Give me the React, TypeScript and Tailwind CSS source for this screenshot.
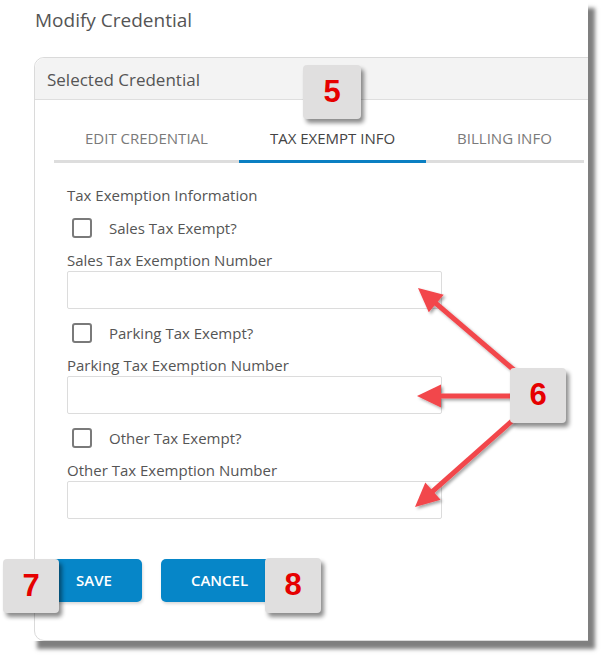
const font = { fontFamily: '"Open Sans", "Noto Sans", sans-serif' };

type Arrow = { x1: number; y1: number; x2: number; y2: number };

const arrows: Arrow[] = [
  { x1: 514, y1: 370, x2: 418, y2: 288 },
  { x1: 512, y1: 396, x2: 417, y2: 396 },
  { x1: 513, y1: 420, x2: 415, y2: 507 },
];

function arrowParts(a: Arrow) {
  const dx = a.x2 - a.x1;
  const dy = a.y2 - a.y1;
  const len = Math.hypot(dx, dy);
  const ux = dx / len;
  const uy = dy / len;
  const bx = a.x2 - ux * 24;
  const by = a.y2 - uy * 24;
  const px = -uy * 11.5;
  const py = ux * 11.5;
  return {
    line: { x1: a.x1, y1: a.y1, x2: bx + ux * 2, y2: by + uy * 2 },
    head: `${a.x2},${a.y2} ${bx + px},${by + py} ${bx - px},${by - py}`,
  };
}

function Badge({ n, className }: { n: string; className: string }) {
  return (
    <div
      className={`absolute flex items-center justify-center rounded-[4px] bg-[#e0dfdf] text-[31px] font-bold text-[#e60000] shadow-[3px_4px_4px_rgba(0,0,0,0.45)] ${className}`}
      style={{ fontFamily: '"Liberation Sans", Arial, sans-serif' }}
    >
      {n}
    </div>
  );
}

function Check({ label }: { label: string }) {
  return (
    <div className="flex h-5 items-center">
      <span className="ml-[5px] h-5 w-5 rounded-[3px] border-2 border-[#7a7a7a] bg-white" />
      <span className="ml-[17px] text-[15px] leading-5 text-[#555]">{label}</span>
    </div>
  );
}

function Field({ label }: { label: string }) {
  return (
    <>
      <div className="mt-3 text-[15px] leading-5 text-[#555]">{label}</div>
      <div className="mt-px h-[38px] w-[375px] rounded-[2px] border border-[#dcdcdc] bg-white" />
    </>
  );
}

export default function App() {
  const tabs = [
    { name: 'EDIT CREDENTIAL', active: false },
    { name: 'TAX EXEMPT INFO', active: true },
    { name: 'BILLING INFO', active: false },
  ];

  return (
    <div className="relative h-[657px] w-[603px] overflow-hidden bg-white" style={font}>
      <div className="ml-[30px] h-[641px] w-[558px] overflow-hidden bg-white shadow-[7px_8px_4px_rgba(0,0,0,0.5)]">
        <h1 className="pl-[5px] pt-2 text-[19px] leading-6 text-[#555]">Modify Credential</h1>

        <div className="ml-[4px] mt-[25px] h-[584px] w-[620px] rounded-l-[10px] border border-[#dadada]">
          <div className="flex h-[42px] items-center rounded-tl-[10px] border-b border-[#dedede] bg-[#f3f3f3] pl-3 pt-[2px] text-[17px] text-[#555]">
            Selected Credential
          </div>

          <div className="ml-[19px] flex w-[530px] border-b-[3px] border-[#dddddd]">
            {tabs.map((t) => (
              <div
                key={t.name}
                className={`-mb-[3px] px-[31px] pb-3 pt-[28px] text-[15px] leading-5 ${
                  t.active ? 'border-b-[3px] border-[#0a7fc2] text-[#444]' : 'text-[#7a7a7a]'
                }`}
              >
                {t.name}
              </div>
            ))}
          </div>

          <div className="pl-[32px] pt-[22px]">
            <div className="text-[15px] leading-5 text-[#555]">Tax Exemption Information</div>
            <div className="mt-[13px]">
              <Check label="Sales Tax Exempt?" />
            </div>
            <Field label="Sales Tax Exemption Number" />
            <div className="mt-[14px]">
              <Check label="Parking Tax Exempt?" />
            </div>
            <Field label="Parking Tax Exemption Number" />
            <div className="mt-[14px]">
              <Check label="Other Tax Exempt?" />
            </div>
            <Field label="Other Tax Exemption Number" />
          </div>

          <div className="ml-[11px] mt-[40px] flex gap-[19px]">
            <button className="h-[43px] w-[96px] rounded-[5px] bg-[#0686c8] text-[15px] font-semibold text-white shadow-[1px_2px_3px_rgba(0,0,0,0.15)]">
              SAVE
            </button>
            <button className="h-[43px] w-[117px] rounded-[5px] bg-[#0686c8] text-[15px] font-semibold text-white shadow-[1px_2px_3px_rgba(0,0,0,0.15)]">
              CANCEL
            </button>
          </div>
        </div>
      </div>

      <svg className="pointer-events-none absolute left-0 top-0" width="603" height="657">
        <defs>
          <filter id="sh" x="-20%" y="-20%" width="140%" height="140%">
            <feDropShadow dx="2" dy="2" stdDeviation="1.5" floodColor="#000" floodOpacity="0.35" />
          </filter>
        </defs>
        {arrows.map((a, i) => {
          const p = arrowParts(a);
          return (
            <g key={i} filter="url(#sh)">
              <line {...p.line} stroke="#f2464b" strokeWidth="5" />
              <polygon points={p.head} fill="#f2464b" />
            </g>
          );
        })}
      </svg>

      <Badge n="5" className="left-[303px] top-[65px] h-[54px] w-[58px]" />
      <Badge n="6" className="left-[510px] top-[368px] h-[55px] w-[56px]" />
      <Badge n="7" className="left-[3px] top-[559px] h-[54px] w-[56px]" />
      <Badge n="8" className="left-[265px] top-[558px] h-[55px] w-[56px]" />
    </div>
  );
}
